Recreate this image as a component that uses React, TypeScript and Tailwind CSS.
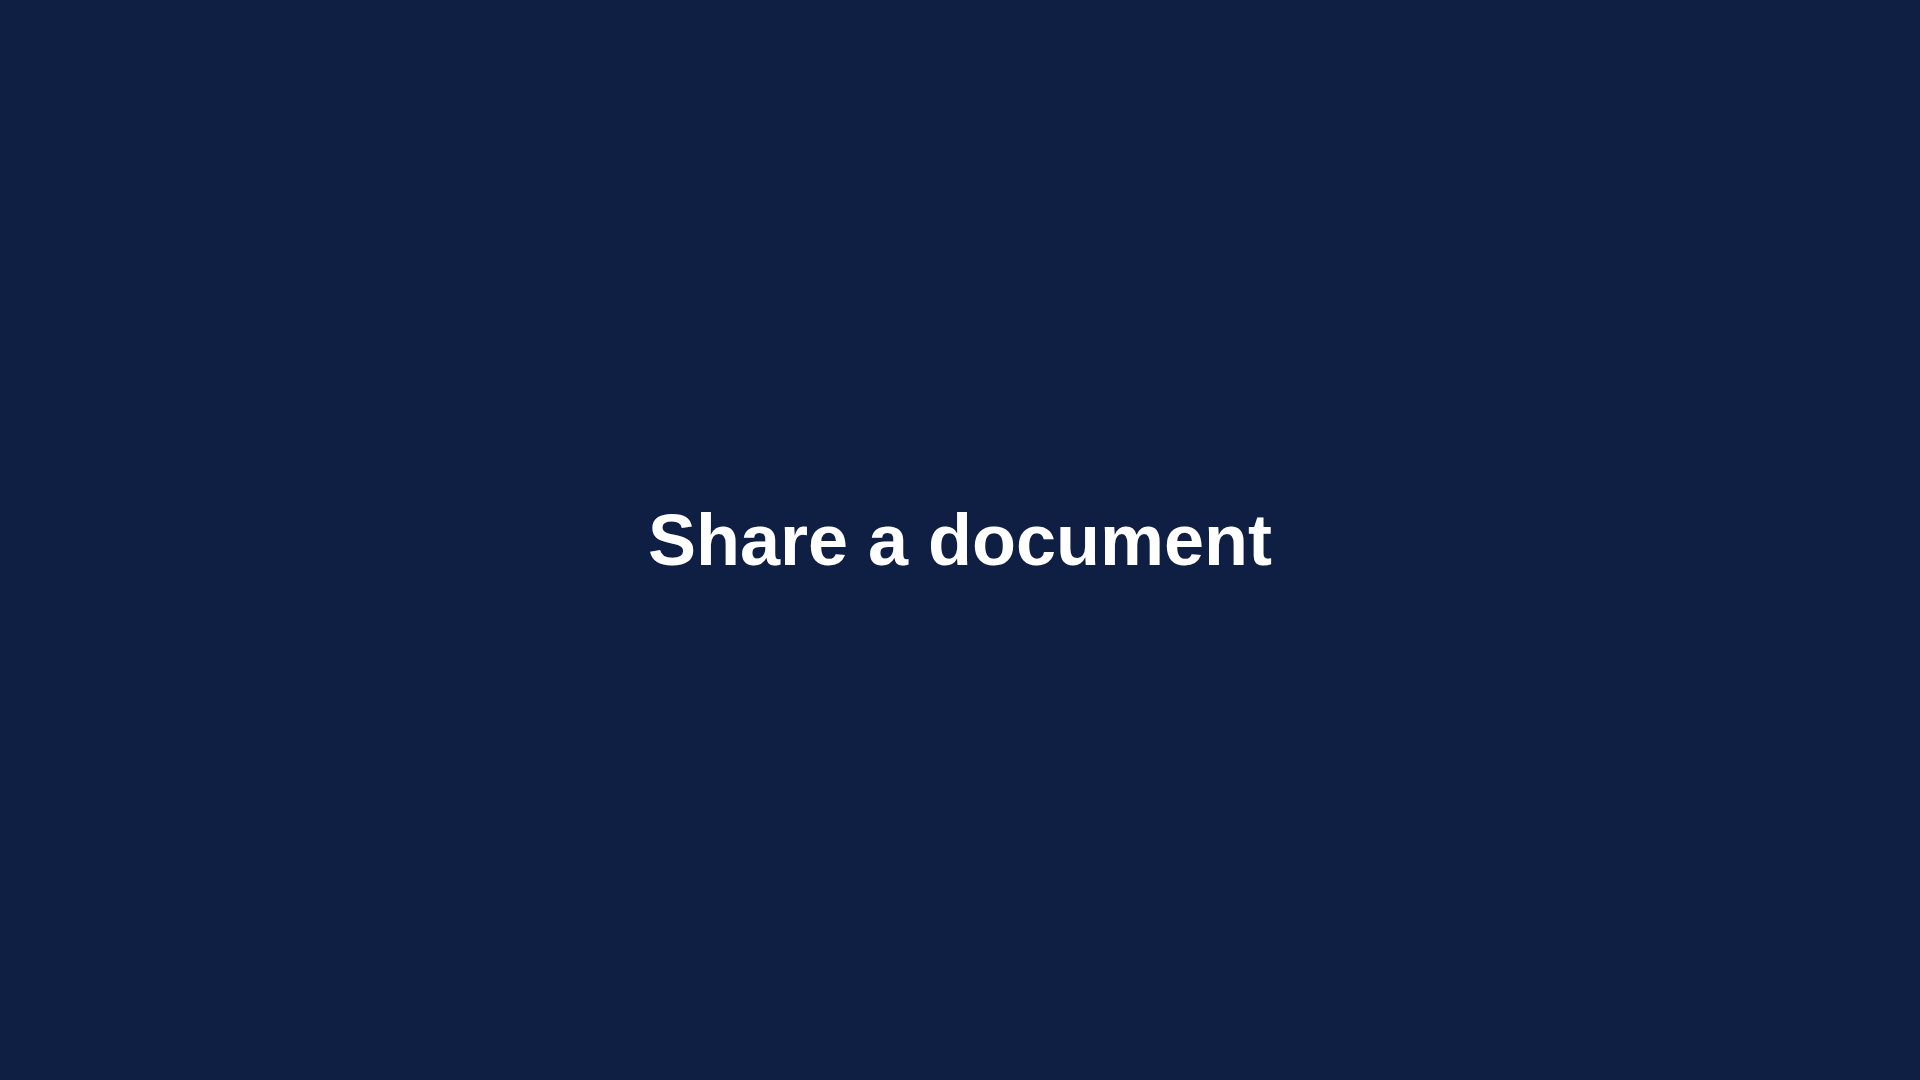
export default function App() {
  return (
    <div className="w-full h-screen bg-[#0e1f43] flex items-center justify-center">
      <h1 className="text-white font-bold text-[72px] leading-none" style={{ fontFamily: '"Liberation Sans", Arial, sans-serif' }}>
        Share a document
      </h1>
    </div>
  );
}
